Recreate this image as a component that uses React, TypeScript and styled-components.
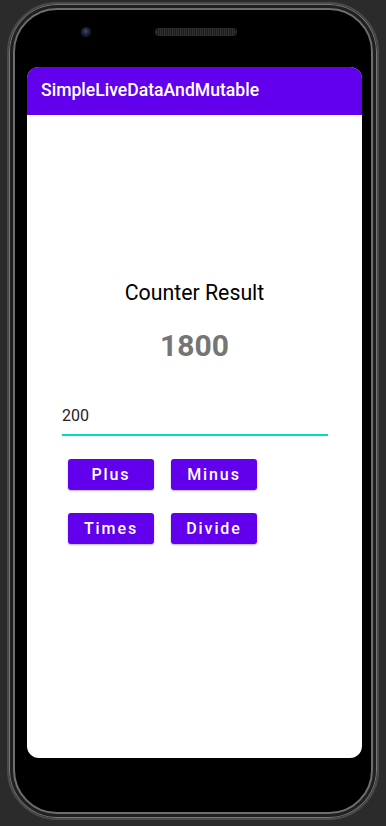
import styled, { createGlobalStyle } from "styled-components";

const GlobalStyle = createGlobalStyle`
  html, body {
    margin: 0;
    padding: 0;
    background: #2b2b2b;
    font-family: Roboto, "Noto Sans", sans-serif;
  }
  * {
    box-sizing: border-box;
  }
`;

const Stage = styled.div`
  width: 386px;
  height: 826px;
  padding: 2px 0 0 7px;
  background: #2b2b2b;
  overflow: hidden;
`;

const Shell = styled.div`
  width: 372px;
  height: 818px;
  border-radius: 50px;
  border: 2px solid #4a4a4a;
  background: #202020;
  padding: 4px;
  box-shadow: inset 0 0 0 1px #777;
`;

const Bezel = styled.div`
  width: 100%;
  height: 100%;
  border-radius: 44px;
  border: 2px solid #6e6e6e;
  background: #000;
  display: flex;
  flex-direction: column;
`;

const TopStrip = styled.div`
  height: 57px;
  display: flex;
  align-items: flex-start;
  padding: 18px 0 0 67px;
`;

const Camera = styled.div`
  width: 8px;
  height: 8px;
  border-radius: 50%;
  background: radial-gradient(circle at 45% 40%, #3b4a7a 0%, #1a2040 55%, #111 100%);
  box-shadow: 0 0 0 1px #222;
`;

const Speaker = styled.div`
  margin: 1px 0 0 66px;
  width: 80px;
  height: 6px;
  border-radius: 3px;
  background: repeating-linear-gradient(90deg, #333 0 1px, #1a1a1a 1px 2px);
  box-shadow: 0 0 0 1px #2a2a2a;
`;

const Screen = styled.div`
  margin-left: 12px;
  width: 335px;
  height: 691px;
  border-radius: 12px;
  background: #fff;
  overflow: hidden;
  display: flex;
  flex-direction: column;
`;

const AppBar = styled.div`
  height: 48px;
  flex-shrink: 0;
  background: #6200ee;
  color: #fff;
  display: flex;
  align-items: center;
  padding: 0 0 2px 14px;
  font-size: 17.6px;
  font-weight: 500;
`;

const Content = styled.div`
  display: flex;
  flex-direction: column;
  align-items: center;
  padding-top: 166px;
`;

const Label = styled.div`
  font-size: 21.3px;
  line-height: 24px;
  color: #000;
`;

const Result = styled.div`
  margin-top: 23px;
  font-size: 30px;
  line-height: 36px;
  font-weight: 700;
  color: #757575;
`;

const Field = styled.div`
  margin-top: 40px;
  align-self: flex-start;
  margin-left: 35px;
  width: 266px;
  height: 32px;
  border-bottom: 2px solid #03dac5;
  font-size: 16px;
  line-height: 24px;
  color: #222;
`;

const ButtonGrid = styled.div`
  align-self: flex-start;
  margin: 23px 0 0 41px;
  display: grid;
  grid-template-columns: 86px 86px;
  column-gap: 17px;
  row-gap: 23px;
`;

const ActionButton = styled.button`
  height: 31px;
  border: none;
  border-radius: 3px;
  background: #6200ee;
  color: #fff;
  font-family: Roboto, "Noto Sans", sans-serif;
  font-size: 16px;
  font-weight: 500;
  letter-spacing: 1.9px;
  padding: 0;
  box-shadow: 0 1px 2px rgba(0, 0, 0, 0.3);
`;

const ops = ["Plus", "Minus", "Times", "Divide"];

export default function App() {
  return (
    <>
      <GlobalStyle />
      <Stage>
        <Shell>
          <Bezel>
            <TopStrip>
              <Camera />
              <Speaker />
            </TopStrip>
            <Screen>
              <AppBar>SimpleLiveDataAndMutable</AppBar>
              <Content>
                <Label>Counter Result</Label>
                <Result>1800</Result>
                <Field>200</Field>
                <ButtonGrid>
                  {ops.map((op) => (
                    <ActionButton key={op}>{op}</ActionButton>
                  ))}
                </ButtonGrid>
              </Content>
            </Screen>
          </Bezel>
        </Shell>
      </Stage>
    </>
  );
}
